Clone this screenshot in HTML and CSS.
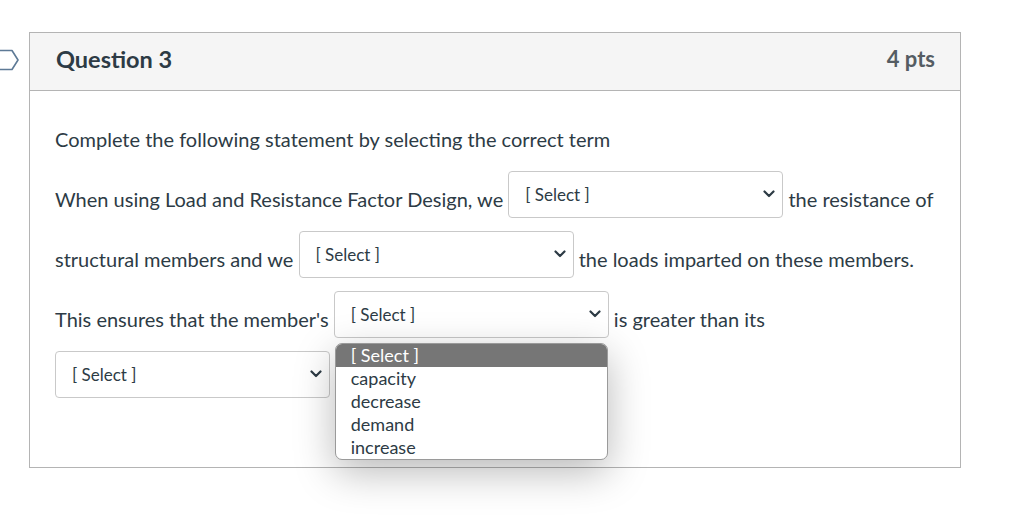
FILE: index.html
```html
<!DOCTYPE html>
<html lang="en">
<head>
<meta charset="utf-8">
<title>Question 3</title>
<link rel="stylesheet" href="styles.css">
</head>
<body>
<svg class="flag" width="20" height="22" viewBox="0 0 20 22" aria-hidden="true">
  <path d="M-4 1.5 H12 L18 11 L12 20.5 H-4 Z" fill="#fff" stroke="#5e7a96" stroke-width="1.6" stroke-linejoin="round"/>
</svg>
<div class="card">
  <div class="card-header">
    <h2 class="title">Question 3</h2>
    <span class="pts">4 pts</span>
  </div>
  <div class="card-body">
    <p class="intro">Complete the following statement by selecting the correct term</p>
    <div class="statement">
      <div class="line">When using Load and Resistance Factor Design, we <span class="select"><span class="select-text">[ Select ]</span><svg class="chev" width="12" height="8" viewBox="0 0 12 8"><path d="M1.5 1.5 L6 6 L10.5 1.5" fill="none" stroke="#2d3b45" stroke-width="2.2" stroke-linecap="round" stroke-linejoin="round"/></svg></span> the resistance of</div>
      <div class="line">structural members and we <span class="select"><span class="select-text">[ Select ]</span><svg class="chev" width="12" height="8" viewBox="0 0 12 8"><path d="M1.5 1.5 L6 6 L10.5 1.5" fill="none" stroke="#2d3b45" stroke-width="2.2" stroke-linecap="round" stroke-linejoin="round"/></svg></span> the loads imparted on these members.</div>
      <div class="line">This ensures that the member's <span class="select open"><span class="select-text">[ Select ]</span><svg class="chev" width="12" height="8" viewBox="0 0 12 8"><path d="M1.5 1.5 L6 6 L10.5 1.5" fill="none" stroke="#2d3b45" stroke-width="2.2" stroke-linecap="round" stroke-linejoin="round"/></svg><span class="dropdown"><span class="option active">[ Select ]</span><span class="option">capacity</span><span class="option">decrease</span><span class="option">demand</span><span class="option">increase</span></span></span> is greater than its</div>
      <div class="line"><span class="select"><span class="select-text">[ Select ]</span><svg class="chev" width="12" height="8" viewBox="0 0 12 8"><path d="M1.5 1.5 L6 6 L10.5 1.5" fill="none" stroke="#2d3b45" stroke-width="2.2" stroke-linecap="round" stroke-linejoin="round"/></svg></span></div>
    </div>
  </div>
</div>
</body>
</html>
```
FILE: styles.css
```css
* { box-sizing: border-box; }
html, body { margin: 0; padding: 0; background: #fff; }
body {
  font-family: Lato, "Open Sans", "Liberation Sans", sans-serif;
  color: #2d3b45;
  position: relative;
  width: 1018px;
  height: 521px;
  overflow: hidden;
  padding-top: 32px;
}
.flag {
  position: absolute;
  left: 0;
  top: 49px;
}
.card {
  margin-left: 29px;
  width: 932px;
  border: 1px solid #b4b4b4;
  background: #fff;
}
.card-header {
  height: 58px;
  background: #f5f5f5;
  border-bottom: 1px solid #b4b4b4;
  display: flex;
  align-items: center;
  justify-content: space-between;
  padding: 0 25px 6px 26px;
}
.title {
  margin: 0;
  font-size: 23.5px;
  font-weight: 700;
  color: #2d3b45;
}
.pts {
  font-size: 22px;
  font-weight: 700;
  color: #555d63;
}
.card-body {
  padding: 35px 25px 58px 25px;
  font-size: 20px;
}
.intro {
  margin: 0 0 16px 0;
  line-height: 27px;
}
.line {
  line-height: 60px;
  height: 60px;
  white-space: nowrap;
}
.select {
  display: inline-flex;
  align-items: center;
  justify-content: space-between;
  width: 275px;
  height: 47px;
  border: 1px solid #c9c9c9;
  border-radius: 4px;
  background: #fff;
  padding: 0 7px 0 16px;
  vertical-align: 7px;
  line-height: 20px;
  font-size: 17px;
  position: relative;
}
.select-text {
  position: relative;
  top: 1px;
}
.chev { display: block; }
.dropdown {
  position: absolute;
  left: 0;
  top: 51px;
  width: 273px;
  height: 117px;
  border: 1px solid #9a9a9a;
  border-radius: 7px;
  background: #fff;
  overflow: hidden;
  display: flex;
  flex-direction: column;
  box-shadow: 0 12px 40px rgba(0, 0, 0, 0.28);
  z-index: 2;
}
.option {
  display: block;
  height: 23px;
  line-height: 22px;
  padding-left: 15px;
  font-size: 18px;
  color: #2d3b45;
}
.option.active {
  background: #767676;
  color: #fff;
}
```
